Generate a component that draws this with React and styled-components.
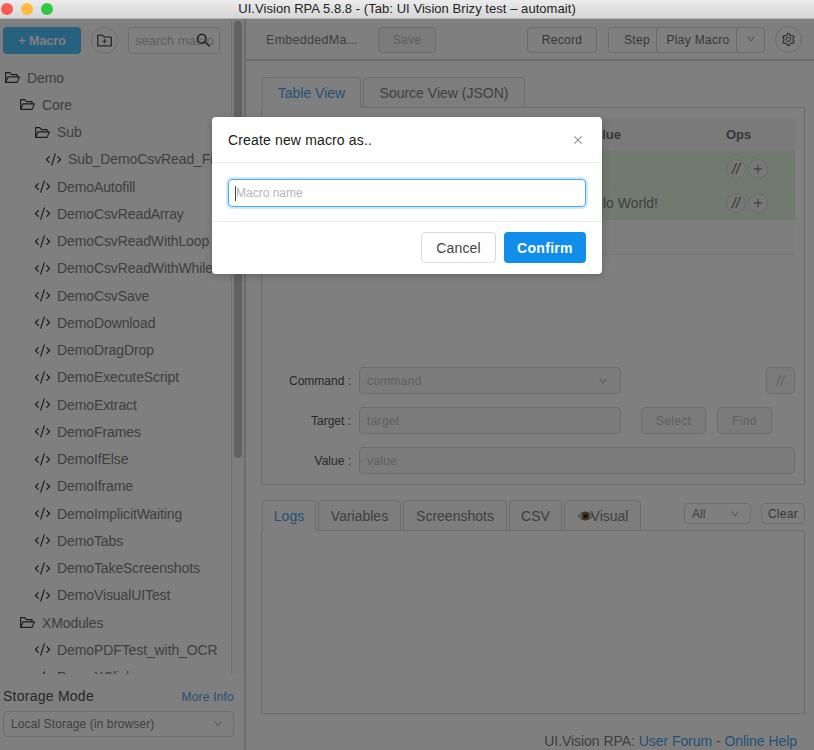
import React from 'react';
import styled, { createGlobalStyle } from 'styled-components';
import { AiOutlineFolderOpen, AiOutlineFolderAdd, AiOutlineSearch, AiOutlineSetting, AiOutlineDown, AiOutlineClose, AiOutlinePlus } from 'react-icons/ai';
import { CodeXml } from 'lucide-react';

const GlobalStyle = createGlobalStyle`
  html, body { margin: 0; padding: 0; background: #fff; }
  body { font-family: "Liberation Sans", Arial, sans-serif; font-size: 14px; color: #6a6a6a; overflow: hidden; }
  * { box-sizing: border-box; }
`;

const Window = styled.div`
  width: 814px;
  height: 750px;
  display: flex;
  flex-direction: column;
  overflow: hidden;
`;

// --- Title bar ---

const TitleBar = styled.div`
  height: 19px;
  flex: none;
  display: flex;
  align-items: center;
  position: relative;
  background: linear-gradient(#ececec, #d6d6d6);
  border-bottom: 1px solid #b4b4b4;
`;

const Lights = styled.div`
  display: flex;
  gap: 8px;
  position: absolute;
  left: 1px;
  top: 3px;
`;

const Light = styled.span`
  width: 12px;
  height: 12px;
  border-radius: 50%;
  background: ${props => props.$color};
`;

const TitleText = styled.div`
  flex: 1;
  text-align: center;
  font-size: 13px;
  letter-spacing: 0.05px;
  color: #222;
  line-height: 18px;
`;

// --- App ---

const AppArea = styled.div`
  flex: 1;
  display: flex;
  position: relative;
  min-height: 0;
`;

const Sidebar = styled.aside`
  width: 246px;
  flex: none;
  display: flex;
  flex-direction: column;
  border-right: 2px solid #d8d8d8;
`;

const TreeArea = styled.div`
  height: 655px;
  flex: none;
  display: flex;
`;

const TreePane = styled.div`
  width: 231px;
  flex: none;
  overflow: hidden;
  padding: 8px 0 0 3px;
`;

const ScrollTrack = styled.div`
  flex: 1;
  border-left: 1px solid #e4e4e4;
  background: #fafafa;
  padding: 2px 2px 0 2px;
`;

const ScrollThumb = styled.div`
  height: 437px;
  border-radius: 5px;
  background: #c4c4c4;
`;

const SideTop = styled.div`
  display: flex;
  align-items: center;
  height: 27px;
  margin-bottom: 10px;
`;

const MacroButton = styled.button`
  width: 78px;
  height: 27px;
  flex: none;
  border: none;
  border-radius: 4px;
  background: #50c0ff;
  color: #fff;
  font: bold 12.5px "Liberation Sans", Arial, sans-serif;
  padding: 1px 0 0;
`;

const CircleButton = styled.button`
  width: ${props => props.$size || 27}px;
  height: ${props => props.$size || 27}px;
  flex: none;
  padding: 0;
  border: 1px solid #d9d9d9;
  border-radius: 50%;
  background: #fff;
  color: #555;
  display: inline-flex;
  align-items: center;
  justify-content: center;
  font-size: ${props => props.$font || 12}px;
`;

const FolderButton = styled(CircleButton)`
  margin-left: 10px;
`;

const SearchBox = styled.div`
  width: 92px;
  height: 27px;
  margin-left: 10px;
  flex: none;
  border: 1px solid #d9d9d9;
  border-radius: 4px;
  padding-left: 6px;
  display: flex;
  align-items: center;
  position: relative;
  overflow: hidden;
  color: #bdbdbd;
  font-size: 13px;
  white-space: nowrap;
`;

const SearchGlyph = styled(AiOutlineSearch)`
  position: absolute;
  right: 7px;
  top: 4px;
  font-size: 17px;
  color: #333;
`;

const TreeRow = styled.div`
  height: 27.25px;
  display: flex;
  align-items: center;
  white-space: nowrap;
  padding-left: ${props => props.$indent}px;
  font-size: 14px;
  letter-spacing: -0.1px;
  color: #808080;
`;

const FolderIcon = styled(AiOutlineFolderOpen)`
  font-size: 17px;
  color: #3a3a3a;
  flex: none;
  margin-right: 6px;
`;

const CodeIcon = styled(CodeXml)`
  width: 17px;
  height: 17px;
  color: #333;
  flex: none;
  margin-right: 6px;
`;

const StorageBox = styled.div`
  flex: 1;
  padding: 14px 10px 0 3px;
`;

const StorageHead = styled.div`
  display: flex;
  justify-content: space-between;
  align-items: baseline;
  margin-bottom: 5px;
  height: 18px;
`;

const StorageTitle = styled.span`
  font-size: 14px;
  letter-spacing: 0.25px;
  color: #505050;
`;

const Link = styled.a`
  color: #4da3ea;
`;

const MoreInfo = styled(Link)`
  font-size: 12px;
  letter-spacing: 0.2px;
`;

const Select = styled.div`
  height: ${props => props.$h || 26}px;
  width: ${props => props.$w ? `${props.$w}px` : 'auto'};
  border: 1px solid #d9d9d9;
  border-radius: 4px;
  padding: 0 10px 0 7px;
  display: flex;
  align-items: center;
  justify-content: space-between;
  font-size: 12px;
  letter-spacing: 0.1px;
  color: ${props => props.$muted ? '#c0c0c0' : '#808080'};
  background: ${props => props.$muted ? '#f7f7f7' : '#fff'};
  svg { font-size: 10px; color: #999; }
`;

// --- Main ---

const Main = styled.main`
  flex: 1;
  min-width: 0;
  display: flex;
  flex-direction: column;
`;

const Toolbar = styled.div`
  height: 42px;
  flex: none;
  display: flex;
  align-items: center;
  padding: 1px 12px 0 20px;
  border-bottom: 2px solid #d6d6d6;
  font-size: 12.5px;
  letter-spacing: 0.3px;
`;

const MacroName = styled.span`
  width: 112px;
  flex: none;
  color: #808080;
`;

const Btn = styled.button`
  height: ${props => props.$h || 26}px;
  width: ${props => props.$w}px;
  flex: none;
  padding: 0;
  border: 1px solid #d9d9d9;
  border-radius: 4px;
  background: ${props => props.$off ? '#f7f7f7' : '#fff'};
  color: ${props => props.$off ? '#c0c0c0' : '#707070'};
  font: 12px "Liberation Sans", Arial, sans-serif;
  letter-spacing: 0.3px;
`;

const RecordBtn = styled(Btn)`
  margin-left: 91px;
`;

const BtnGroup = styled.div`
  display: flex;
  height: 26px;
  margin-left: 11px;
  margin-right: 10px;
  & > button { border-radius: 0; margin-left: -1px; }
  & > button:first-child { border-radius: 4px 0 0 4px; margin-left: 0; padding-left: 9px; }
  & > button:nth-child(2) { padding-left: 3px; }
  & > button:last-child { border-radius: 0 4px 4px 0; font-size: 10px; color: #888; }
`;

const GearButton = styled(CircleButton)`
  font-size: 15px;
`;

const Content = styled.div`
  flex: 1;
  min-height: 0;
  display: flex;
  flex-direction: column;
  padding: 16px 9px 0 15px;
`;

const TabRow = styled.div`
  display: flex;
  align-items: flex-end;
  gap: 2px;
  height: 30px;
  flex: none;
  padding-left: 1px;
`;

const Tab = styled.div`
  height: 31px;
  width: ${props => props.$w}px;
  flex: none;
  margin-bottom: -1px;
  border: 1px solid #d9d9d9;
  border-bottom-color: ${props => props.$active ? '#fff' : '#d9d9d9'};
  border-radius: 4px 4px 0 0;
  background: ${props => props.$active ? '#fff' : '#fafafa'};
  color: ${props => props.$active ? '#4da3ea' : '#808080'};
  display: flex;
  align-items: center;
  justify-content: center;
  font-size: 14px;
  position: relative;
`;

const EditorPanel = styled.section`
  height: 378px;
  flex: none;
  border: 1px solid #d9d9d9;
  padding: 10px 9px 0 9px;
`;

const Table = styled.div`
  height: 137px;
  display: grid;
  grid-template-columns: 150px 149px 144px 1fr;
  grid-template-rows: 34px 35px 33px 35px;
`;

const HeadCell = styled.div`
  background: #f4f4f4;
  display: flex;
  align-items: center;
  padding-left: ${props => props.$pad || 12}px;
  font-size: 13px;
  font-weight: bold;
  color: #707070;
  border-bottom: 1px solid #e9e9e9;
`;

const Cell = styled.div`
  background: #e3f5de;
  display: flex;
  align-items: center;
  gap: 2px;
  padding-left: 12px;
  font-size: 14px;
  color: #808080;
  border-bottom: 1px solid #e9e9e9;
`;

const EmptyRow = styled.div`
  grid-column: 1 / -1;
  background: #fafafa;
  border-bottom: 1px solid #e9e9e9;
`;

const OpsButton = styled(CircleButton)`
  background: #f0f0f0;
  border-color: #d4d4d4;
  font-style: ${props => props.$italic ? 'italic' : 'normal'};
  color: #666;
`;

const Form = styled.div`
  margin-top: 112px;
  display: grid;
  grid-template-columns: 80px 262px 1fr;
  column-gap: 8px;
  row-gap: 13px;
  align-items: center;
`;

const FieldLabel = styled.label`
  text-align: right;
  font-size: 12px;
  color: #505050;
`;

const FieldInput = styled.div`
  height: 27px;
  grid-column: ${props => props.$wide ? '2 / 4' : 'auto'};
  border: 1px solid #d9d9d9;
  border-radius: 4px;
  background: #f7f7f7;
  color: #c0c0c0;
  padding-left: 7px;
  display: flex;
  align-items: center;
  font-size: 12px;
  letter-spacing: 0.3px;
`;

const CommandSelect = styled(Select)`
  height: 27px;
  padding-right: 12px;
  letter-spacing: 0.3px;
`;

const FieldActions = styled.div`
  display: flex;
  gap: 11px;
  padding-left: 12px;
  justify-content: ${props => props.$end ? 'flex-end' : 'flex-start'};
`;

const CommentBtn = styled(Btn)`
  font-style: italic;
  font-size: 14px;
`;

const LogBar = styled.div`
  display: flex;
  margin-top: 15px;
  height: 30px;
  flex: none;
  justify-content: space-between;
`;

const LogControls = styled.div`
  display: flex;
  gap: 10px;
  padding-top: 3px;
`;

const LogPanel = styled.section`
  height: 184px;
  flex: none;
  border: 1px solid #d9d9d9;
`;

const EyeIcon = styled.svg`
  width: 17px;
  height: 14px;
  flex: none;
  margin-right: -3px;
`;

const Footer = styled.div`
  flex: 1;
  text-align: right;
  padding: 19px 8px 0 0;
  font-size: 14px;
  letter-spacing: -0.05px;
  color: #808080;
`;

// --- Modal ---

const Overlay = styled.div`
  position: absolute;
  inset: 0;
  background: rgba(0, 0, 0, 0.5);
  display: flex;
  justify-content: center;
  align-items: flex-start;
  padding-top: 98px;
`;

const Modal = styled.div`
  width: 390px;
  height: 157px;
  background: #fff;
  border-radius: 4px;
  box-shadow: 0 2px 8px rgba(0, 0, 0, 0.2);
`;

const ModalHead = styled.div`
  height: 46px;
  display: flex;
  align-items: center;
  justify-content: space-between;
  padding: 0 18px 0 16px;
  border-bottom: 1px solid #e9e9e9;
  font-size: 14px;
  letter-spacing: 0.15px;
  color: #1a1a1a;
  svg { font-size: 12px; color: #8a8a8a; }
`;

const ModalBody = styled.div`
  height: 59px;
  padding: 16px 16px 0;
  border-bottom: 1px solid #e9e9e9;
`;

const NameInput = styled.div`
  height: 28px;
  border: 1px solid #49a9ee;
  border-radius: 4px;
  box-shadow: 0 0 0 2px rgba(16, 142, 233, 0.2);
  padding-left: 6px;
  display: flex;
  align-items: center;
  font-size: 12px;
  color: #b5b5b5;
`;

const Caret = styled.span`
  width: 1px;
  height: 15px;
  background: #444;
`;

const ModalFoot = styled.div`
  display: flex;
  justify-content: flex-end;
  gap: 8px;
  padding: 10px 16px 0;
`;

const CancelBtn = styled.button`
  width: 75px;
  height: 31px;
  padding: 0;
  border: 1px solid #d9d9d9;
  border-radius: 4px;
  background: #fff;
  color: #444;
  font: 14px "Liberation Sans", Arial, sans-serif;
  letter-spacing: 0.15px;
`;

const ConfirmBtn = styled(CancelBtn)`
  width: 82px;
  border: none;
  background: #108ee9;
  color: #fff;
  font-weight: bold;
  letter-spacing: 0.3px;
`;

// --- Data ---

const tree = [
  { name: 'Demo', indent: 1, folder: true },
  { name: 'Core', indent: 16, folder: true },
  { name: 'Sub', indent: 31, folder: true },
  { name: 'Sub_DemoCsvRead_FillForm', indent: 42 },
  ...['DemoAutofill', 'DemoCsvReadArray', 'DemoCsvReadWithLoop', 'DemoCsvReadWithWhile', 'DemoCsvSave', 'DemoDownload',
    'DemoDragDrop', 'DemoExecuteScript', 'DemoExtract', 'DemoFrames', 'DemoIfElse', 'DemoIframe', 'DemoImplicitWaiting',
    'DemoTabs', 'DemoTakeScreenshots', 'DemoVisualUITest'].map(name => ({ name, indent: 31 })),
  { name: 'XModules', indent: 16, folder: true },
  { name: 'DemoPDFTest_with_OCR', indent: 31 },
  { name: 'DemoXClick', indent: 31 },
];

const RowOps = () => (
  <Cell>
    <OpsButton $size={20} $font={14} $italic>//</OpsButton>
    <OpsButton $size={20} $font={12}><AiOutlinePlus /></OpsButton>
  </Cell>
);

const App = () => (
  <Window>
    <GlobalStyle />
    <TitleBar>
      <Lights>
        <Light $color="#fc5b57" />
        <Light $color="#fdbc40" />
        <Light $color="#33c748" />
      </Lights>
      <TitleText>UI.Vision RPA 5.8.8 - (Tab: UI Vision Brizy test – automait)</TitleText>
    </TitleBar>

    <AppArea>
      <Sidebar>
        <TreeArea>
          <TreePane>
            <SideTop>
              <MacroButton>+ Macro</MacroButton>
              <FolderButton $font={19}><AiOutlineFolderAdd /></FolderButton>
              <SearchBox>search macro<SearchGlyph /></SearchBox>
            </SideTop>
            {tree.map(row => (
              <TreeRow key={row.name} $indent={row.indent}>
                {row.folder ? <FolderIcon /> : <CodeIcon strokeWidth={1.6} />}
                {row.name}
              </TreeRow>
            ))}
          </TreePane>
          <ScrollTrack><ScrollThumb /></ScrollTrack>
        </TreeArea>
        <StorageBox>
          <StorageHead>
            <StorageTitle>Storage Mode</StorageTitle>
            <MoreInfo>More Info</MoreInfo>
          </StorageHead>
          <Select>Local Storage (in browser)<AiOutlineDown /></Select>
        </StorageBox>
      </Sidebar>

      <Main>
        <Toolbar>
          <MacroName>EmbeddedMa...</MacroName>
          <Btn $w={58} $off>Save</Btn>
          <RecordBtn $w={70}>Record</RecordBtn>
          <BtnGroup>
            <Btn $w={49}>Step</Btn>
            <Btn $w={81}>Play Macro</Btn>
            <Btn $w={29}><AiOutlineDown /></Btn>
          </BtnGroup>
          <GearButton $size={27}><AiOutlineSetting /></GearButton>
        </Toolbar>

        <Content>
          <TabRow>
            <Tab $w={99} $active>Table View</Tab>
            <Tab $w={162}>Source View (JSON)</Tab>
          </TabRow>
          <EditorPanel>
            <Table>
              <HeadCell>Command</HeadCell>
              <HeadCell>Target</HeadCell>
              <HeadCell $pad={17}>Value</HeadCell>
              <HeadCell>Ops</HeadCell>
              <Cell />
              <Cell />
              <Cell />
              <RowOps />
              <Cell />
              <Cell />
              <Cell>Hello World!</Cell>
              <RowOps />
              <EmptyRow />
            </Table>
            <Form>
              <FieldLabel>Command :</FieldLabel>
              <CommandSelect $muted>command<AiOutlineDown /></CommandSelect>
              <FieldActions $end><CommentBtn $w={29} $h={27} $off>//</CommentBtn></FieldActions>
              <FieldLabel>Target :</FieldLabel>
              <FieldInput>target</FieldInput>
              <FieldActions>
                <Btn $w={65} $h={27} $off>Select</Btn>
                <Btn $w={55} $h={27} $off>Find</Btn>
              </FieldActions>
              <FieldLabel>Value :</FieldLabel>
              <FieldInput $wide>value</FieldInput>
            </Form>
          </EditorPanel>

          <LogBar>
            <TabRow>
              <Tab $w={54} $active>Logs</Tab>
              <Tab $w={83}>Variables</Tab>
              <Tab $w={104}>Screenshots</Tab>
              <Tab $w={53}>CSV</Tab>
              <Tab $w={77}>
                <EyeIcon viewBox="0 0 17 14">
                  <path d="M1 7 Q8.5 -1 16 7 Q8.5 15 1 7Z" fill="#e8e8e8" stroke="#777" strokeWidth="1" />
                  <circle cx="8.5" cy="7" r="4.2" fill="#8a6a3a" />
                  <circle cx="8.5" cy="7" r="2" fill="#222" />
                </EyeIcon>
                Visual
              </Tab>
            </TabRow>
            <LogControls>
              <Select $w={67} $h={21}>All<AiOutlineDown /></Select>
              <Btn $w={44} $h={21}>Clear</Btn>
            </LogControls>
          </LogBar>
          <LogPanel />
          <Footer>UI.Vision RPA: <Link>User Forum</Link> - <Link>Online Help</Link></Footer>
        </Content>
      </Main>

      <Overlay>
        <Modal>
          <ModalHead>Create new macro as..<AiOutlineClose /></ModalHead>
          <ModalBody>
            <NameInput><Caret />Macro name</NameInput>
          </ModalBody>
          <ModalFoot>
            <CancelBtn>Cancel</CancelBtn>
            <ConfirmBtn>Confirm</ConfirmBtn>
          </ModalFoot>
        </Modal>
      </Overlay>
    </AppArea>
  </Window>
);

export default App;
